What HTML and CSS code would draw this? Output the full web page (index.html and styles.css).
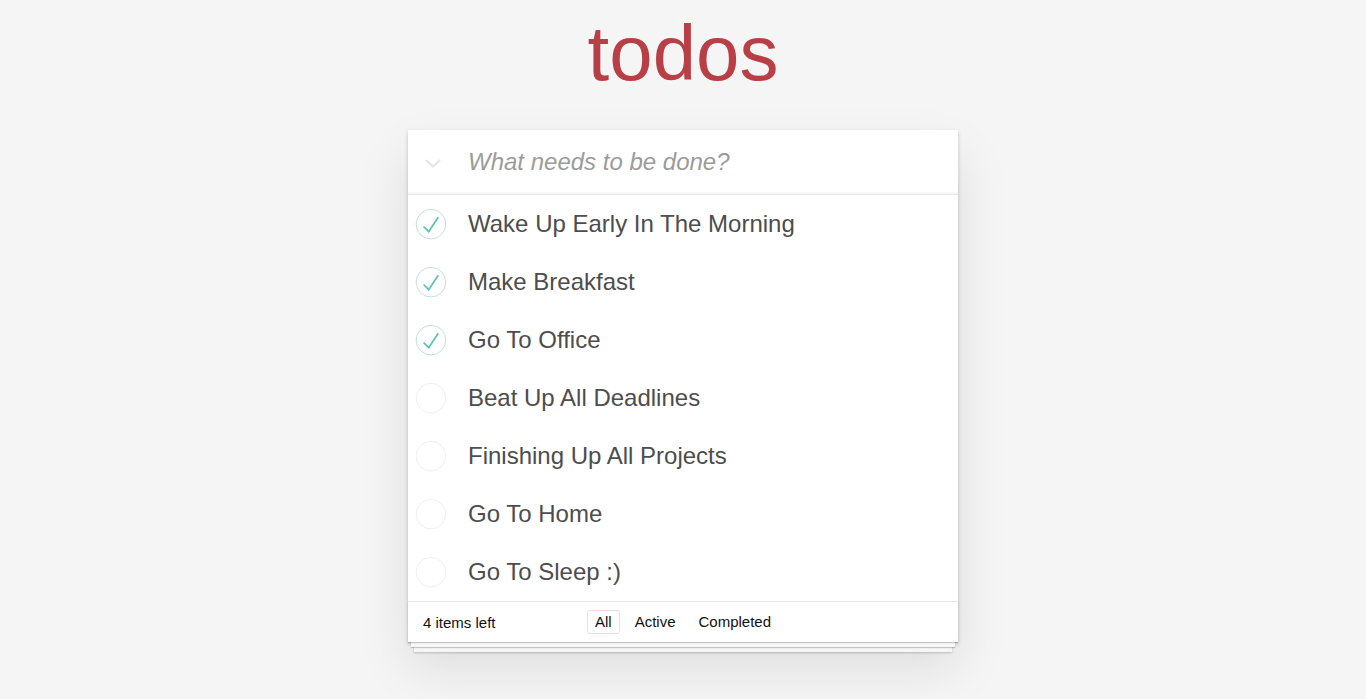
FILE: index.html
```html
<!DOCTYPE html>
<html lang="en">
<head>
<meta charset="utf-8">
<title>todos</title>
<link rel="stylesheet" href="styles.css">
</head>
<body>
<h1 class="title">todos</h1>
<section class="todoapp">
  <header class="header">
    <span class="toggle-all">
      <svg width="16" height="9" viewBox="0 0 16 9"><polyline points="1,1 8,7.5 15,1" fill="none" stroke="#e6e6e6" stroke-width="2.2"/></svg>
    </span>
    <input class="new-todo" placeholder="What needs to be done?">
  </header>
  <ul class="todo-list">
    <li class="todo"><svg class="check" width="40" height="40" viewBox="-10 -18 100 135"><circle cx="50" cy="50" r="50" fill="none" stroke="#bddad5" stroke-width="3"/><path fill="#5dc2af" d="M72 25L42 71 27 56l-4 4 20 20 34-52z"/></svg><span class="label">Wake Up Early In The Morning</span></li>
    <li class="todo"><svg class="check" width="40" height="40" viewBox="-10 -18 100 135"><circle cx="50" cy="50" r="50" fill="none" stroke="#bddad5" stroke-width="3"/><path fill="#5dc2af" d="M72 25L42 71 27 56l-4 4 20 20 34-52z"/></svg><span class="label">Make Breakfast</span></li>
    <li class="todo"><svg class="check" width="40" height="40" viewBox="-10 -18 100 135"><circle cx="50" cy="50" r="50" fill="none" stroke="#bddad5" stroke-width="3"/><path fill="#5dc2af" d="M72 25L42 71 27 56l-4 4 20 20 34-52z"/></svg><span class="label">Go To Office</span></li>
    <li class="todo"><svg class="check" width="40" height="40" viewBox="-10 -18 100 135"><circle cx="50" cy="50" r="50" fill="none" stroke="#ededed" stroke-width="3"/></svg><span class="label">Beat Up All Deadlines</span></li>
    <li class="todo"><svg class="check" width="40" height="40" viewBox="-10 -18 100 135"><circle cx="50" cy="50" r="50" fill="none" stroke="#ededed" stroke-width="3"/></svg><span class="label">Finishing Up All Projects</span></li>
    <li class="todo"><svg class="check" width="40" height="40" viewBox="-10 -18 100 135"><circle cx="50" cy="50" r="50" fill="none" stroke="#ededed" stroke-width="3"/></svg><span class="label">Go To Home</span></li>
    <li class="todo"><svg class="check" width="40" height="40" viewBox="-10 -18 100 135"><circle cx="50" cy="50" r="50" fill="none" stroke="#ededed" stroke-width="3"/></svg><span class="label">Go To Sleep :)</span></li>
  </ul>
  <footer class="footer">
    <span class="count">4 items left</span>
    <ul class="filters">
      <li><a class="filter selected">All</a></li>
      <li><a class="filter">Active</a></li>
      <li><a class="filter">Completed</a></li>
    </ul>
    <span class="spacer"></span>
  </footer>
</section>
</body>
</html>
```

FILE: styles.css
```css
html, body {
  margin: 0;
  padding: 0;
}
body {
  background: #f5f5f5;
  font-family: "Liberation Sans", Arial, sans-serif;
  color: #111;
  min-height: 100vh;
  overflow: hidden;
}
.title {
  margin: 0;
  padding-top: 8px;
  font-size: 78px;
  line-height: 91px;
  font-weight: normal;
  text-align: center;
  color: #b83f45;
}
.todoapp {
  width: 550px;
  margin: 31px auto 40px;
  background: #fff;
  box-shadow: 0 2px 4px 0 rgba(0, 0, 0, 0.2), 0 25px 50px 0 rgba(0, 0, 0, 0.1);
}
.header {
  display: flex;
  align-items: center;
  height: 64px;
  box-shadow: inset 0 -2px 1px rgba(0, 0, 0, 0.03);
  border-bottom: 1px solid #e6e6e6;
}
.toggle-all {
  flex: none;
  width: 60px;
  display: flex;
  padding-left: 17px;
  box-sizing: border-box;
  padding-top: 3px;
}
.new-todo {
  flex: 1;
  border: 0;
  outline: none;
  background: transparent;
  font-family: inherit;
  font-size: 24px;
  line-height: 33.6px;
  padding: 0 16px 0 0;
  margin-top: -1px;
  color: #4d4d4d;
}
.new-todo::placeholder {
  font-style: italic;
  color: #9b9b9b;
}
.todo-list {
  list-style: none;
  margin: 0;
  padding: 0;
}
.todo {
  display: flex;
  align-items: center;
  height: 58px;
}
.check {
  flex: none;
}
.label {
  margin-left: 20px;
  font-size: 24px;
  line-height: 1.2;
  color: #4d4d4d;
  white-space: nowrap;
}
.footer {
  display: grid;
  grid-template-columns: 1fr auto 1fr;
  align-items: center;
  height: 40px;
  padding: 0 15px;
  border-top: 1px solid #e6e6e6;
  font-size: 15px;
  color: #111;
  box-shadow: 0 1px 1px rgba(0, 0, 0, 0.2), 0 8px 0 -3px #f6f6f6, 0 9px 1px -3px rgba(0, 0, 0, 0.2), 0 16px 0 -6px #f6f6f6, 0 17px 2px -6px rgba(0, 0, 0, 0.2);
}
.filters {
  display: flex;
  gap: 7px;
  list-style: none;
  margin: 0;
  padding: 0;
}
.filter {
  display: block;
  padding: 3px 7px;
  border: 1px solid transparent;
  border-radius: 3px;
  line-height: 16px;
  color: inherit;
}
.filter.selected {
  border-color: rgba(206, 70, 70, 0.2);
}
```
